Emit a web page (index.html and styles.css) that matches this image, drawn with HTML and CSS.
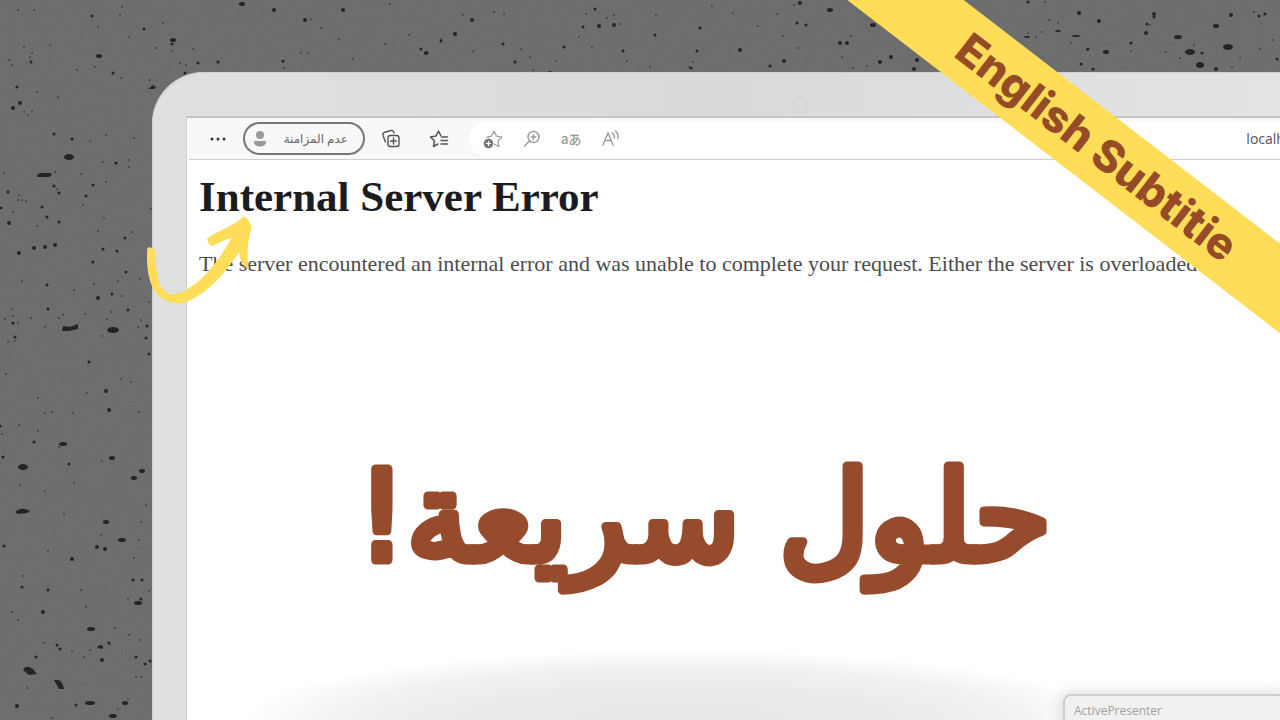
FILE: index.html
```html
<!DOCTYPE html>
<html lang="en">
<head>
<meta charset="utf-8">
<title>Internal Server Error</title>
<link rel="stylesheet" href="styles.css">
</head>
<body>
<div class="scene">
  <svg class="wall" viewBox="0 0 1280 720" preserveAspectRatio="xMinYMin slice" aria-hidden="true">
    <defs>
      <filter id="grain" x="0" y="0" width="100%" height="100%">
        <feTurbulence type="fractalNoise" baseFrequency="0.55" numOctaves="3" seed="4"/>
        <feColorMatrix values="0 0 0 0 0.2  0 0 0 0 0.2  0 0 0 0 0.2  0.9 0 0 0 -0.38"/>
      </filter>
    </defs>
    <rect width="1280" height="720" fill="#6c6c6c"/>
    <rect width="1280" height="720" filter="url(#grain)"/>
    <g class="pits">
      <path class="pit-s" d="M18 10h0M34 10h0M122 7h0M98 27h0M120 15h0M163 23h0M24 47h0M32 53h0M9 60h0M12 65h0M30 57h0M50 45h0M129 37h0M156 48h0M172 51h0M193 49h0M180 63h0M186 65h0M77 70h0M95 67h0M121 78h0M37 92h0M58 97h0M32 111h0M28 115h0M24 112h0M150 80h0M90 141h0M106 135h0M134 138h0M103 162h0M129 160h0M129 167h0M4 173h0M55 172h0M81 174h0M106 182h0M57 189h0M19 195h0M22 200h0M26 201h0M18 200h0M13 212h0M83 205h0M37 226h0M98 231h0M104 218h0M132 232h0M151 209h0M22 281h0M74 290h0M94 284h0M118 281h0M140 279h0M12 309h0M13 316h0M5 319h0M18 323h0M31 318h0M45 327h0M59 318h0M63 315h0M85 314h0M107 319h0M111 312h0M122 296h0M141 320h0M138 327h0M15 341h0M8 342h0M102 336h0M149 302h0M6 374h0M121 379h0M131 382h0M87 393h0M38 398h0M52 412h0M45 413h0M73 413h0M19 425h0M38 431h0M2 434h0M102 461h0M59 447h0M139 412h0M20 485h0M45 491h0M74 483h0M64 514h0M101 535h0M141 522h0M139 540h0M134 558h0M48 551h0M23 576h0M12 612h0M18 620h0M115 628h0M129 635h0M44 643h0M90 650h0M72 651h0M84 657h0M140 640h0M136 677h0M141 677h0M27 688h0M118 709h0M128 699h0M52 718h0M128 599h0M149 591h0M86 607h0M81 590h0M146 505h0M311 19h0M321 28h0M339 39h0M301 53h0M308 53h0M353 59h0M284 68h0M390 4h0M385 44h0M409 35h0M463 15h0M473 51h0M441 39h0M504 14h0M494 12h0M521 49h0M515 61h0M533 70h0M556 61h0M530 57h0M579 37h0M586 14h0M607 18h0M614 15h0M620 24h0M592 47h0M627 61h0M656 15h0M689 67h0M693 62h0M650 67h0M712 6h0M733 13h0M758 26h0M777 14h0M794 5h0M783 36h0M798 48h0M745 78h0M719 80h0M851 36h0M853 68h0M842 57h0M867 66h0M1028 33h0M1042 32h0M1049 20h0M1058 23h0M1036 37h0M1087 50h0M1131 51h0M1150 25h0M1194 45h0M1254 12h0M1273 40h0M1260 49h0M1240 58h0M1232 67h0M1166 52h0M1180 58h0M1071 43h0M1045 2h0"/>
      <path class="pit-m" d="M92 16h0M144 29h0M31 62h0M113 73h0M17 87h0M54 134h0M72 139h0M116 163h0M54 186h0M93 185h0M86 196h0M59 193h0M8 192h0M42 207h0M47 217h0M59 222h0M1 208h0M125 238h0M172 44h0M198 63h0M218 62h0M185 73h0M103 249h0M117 251h0M93 262h0M126 272h0M47 285h0M112 294h0M128 310h0M48 309h0M147 326h0M146 338h0M149 354h0M13 323h0M15 337h0M89 362h0M34 442h0M0 426h0M3 457h0M69 464h0M4 546h0M22 587h0M48 590h0M142 580h0M133 580h0M36 657h0M57 645h0M60 649h0M76 705h0M109 643h0M136 657h0M145 664h0M150 661h0M141 599h0M283 61h0M427 53h0M441 41h0M421 49h0M503 44h0M515 62h0M564 47h0M611 79h0M583 27h0M595 9h0M623 51h0M655 35h0M697 51h0M691 68h0M700 28h0M770 66h0M797 23h0M806 25h0M1028 2h0M1147 24h0M1154 17h0M1259 16h0M1265 14h0M1131 43h0M1088 49h0M1093 69h0M1081 64h0M1277 59h0M1202 53h0"/>
      <path class="pit-l" d="M20 103h0M13 108h0M55 245h0M19 253h0M34 248h0M45 247h0M9 223h0M98 298h0M106 391h0M109 410h0M97 547h0M105 549h0M43 612h0M102 660h0M72 559h0M274 10h0M305 20h0M343 10h0M455 34h0M472 20h0M426 53h0M550 73h0M599 26h0M614 25h0M740 50h0M784 61h0M800 3h0M840 43h0M847 43h0M880 62h0M891 57h0M917 60h0M914 69h0M1079 13h0M1099 21h0M1154 14h0M1146 33h0M1216 69h0M17 706h0"/>
      <ellipse cx="69" cy="157" rx="5" ry="3"/>
      <path d="M37 175l3-2h11l1 2-3 2H37zM148 89l5-4 3 2-2 2zM62 331l1-5 7 1 8-3v5l-9 2z"/>
      <ellipse cx="113" cy="330" rx="6" ry="3"/>
      <path d="M15 512q6-6 15-1l-3 2-9 1zM97 648q2-5 6-2v3zM23 670q3-6 10-1l4 5-8 1zM54 680q8-2 10 9h-5z"/>
      <ellipse cx="106" cy="522" rx="3" ry="2"/>
      <ellipse cx="122" cy="540" rx="4" ry="2"/>
      <ellipse cx="138" cy="603" rx="4" ry="2"/>
      <ellipse cx="91" cy="629" rx="4" ry="2"/>
      <ellipse cx="90" cy="703" rx="5" ry="2"/>
      <ellipse cx="113" cy="716" rx="4" ry="2"/>
      <ellipse cx="125" cy="703" rx="3" ry="2"/>
      <ellipse cx="23" cy="467" rx="5" ry="3"/>
      <ellipse cx="63" cy="444" rx="4" ry="2"/>
      <ellipse cx="112" cy="458" rx="3" ry="2"/>
      <ellipse cx="134" cy="478" rx="3" ry="2"/>
      <ellipse cx="142" cy="471" rx="3" ry="2"/>
      <ellipse cx="242" cy="4" rx="3" ry="2"/>
      <ellipse cx="173" cy="40" rx="3" ry="2"/>
      <ellipse cx="99" cy="56" rx="3" ry="2"/>
      <ellipse cx="830" cy="10" rx="3" ry="2"/>
      <ellipse cx="873" cy="25" rx="3" ry="2"/>
      <ellipse cx="1027" cy="37" rx="3" ry="1"/>
      <ellipse cx="1058" cy="31" rx="3" ry="1"/>
      <ellipse cx="1076" cy="36" rx="4" ry="1"/>
      <ellipse cx="1106" cy="52" rx="3" ry="2"/>
      <ellipse cx="1178" cy="37" rx="4" ry="2"/>
      <ellipse cx="1190" cy="52" rx="5" ry="3"/>
      <ellipse cx="1200" cy="65" rx="4" ry="3"/>
      <ellipse cx="1228" cy="47" rx="5" ry="3"/>
      <ellipse cx="1216" cy="26" rx="3" ry="2"/>
      <ellipse cx="1231" cy="15" rx="2" ry="2"/>
    </g>
  </svg>

  <div class="device">
    <div class="camera"></div>
    <div class="screen">
      <div class="toolbar">
        <button class="tool menu" aria-label="Menu"><svg width="18" height="18" viewBox="0 0 18 18"><g fill="#333"><circle cx="3" cy="9" r="1.5"/><circle cx="9" cy="9" r="1.5"/><circle cx="15" cy="9" r="1.5"/></g></svg></button>
        <button class="profile" dir="rtl" lang="ar"><span>عدم المزامنة</span><svg width="14" height="18" viewBox="0 0 14 18" fill="#999"><circle cx="7" cy="5" r="4"/><path d="M1 11h12v1c0 6-12 6-12 0z"/></svg></button>
        <button class="tool" aria-label="Collections"><svg width="20" height="20" viewBox="0 0 20 20" fill="none" stroke="#555" stroke-width="1.4" stroke-linecap="round"><rect x="7" y="6.500" width="11" height="11" rx="2.500"/><path d="M12.500 9v6M9.500 12h6M4.500 13 2 6.500Q1.300 4 3.800 3.200L10 1.500q2-.5 2.600 1.500l.4 1"/></svg></button>
        <button class="tool fav" aria-label="Favorites"><svg width="20" height="20" viewBox="0 0 20 20" fill="none" stroke="#555" stroke-width="1.500" stroke-linejoin="round" stroke-linecap="round"><path d="M12 7 9.500 2 7 7 1.500 8l4 4-1 5.500L9 15M13 8h5.500M12 11.500h6.500M12 15h6.500"/></svg></button>
        <div class="address">
          <button class="tool" aria-label="Add to favorites"><svg width="20" height="20" viewBox="0 0 20 20" fill="none" stroke="#999" stroke-width="1.200" stroke-linejoin="round"><path d="m11 2 2.500 5.200 5.500.8-4 4 1 5.500-5-2.500M6 9 4 8l4.500-.8L11 2"/><circle cx="5.500" cy="14.500" r="4.800" fill="#777" stroke="none"/><path d="M5.500 12v5M3 14.500h5" stroke="#fff"/></svg></button>
          <button class="tool" aria-label="Zoom"><svg width="20" height="20" viewBox="0 0 20 20" fill="none" stroke="#999" stroke-width="1.400" stroke-linecap="round"><circle cx="11.500" cy="8" r="5.500"/><path d="M7.500 12 2.500 17M11.500 5.500v5M9 8h5"/></svg></button>
          <button class="tool translate" aria-label="Translate">aあ</button>
          <button class="tool" aria-label="Read aloud"><svg width="20" height="20" viewBox="0 0 20 20" fill="none" stroke="#999" stroke-width="1.400" stroke-linecap="round"><path d="M3 16 8 4 13 16M5 11.500h6.500M12.500 4q2 2 2 5M15.500 2q3 3 2.500 7.500"/></svg></button>
          <span class="url">localhost</span>
        </div>
      </div>
      <main class="page">
        <h1>Internal Server Error</h1>
        <p>The server encountered an internal error and was unable to complete your request. Either the server is overloaded or</p>
      </main>
      <div class="glow"></div>
      <div class="presenter">ActivePresenter</div>
    </div>
  </div>

  <svg class="arrow" width="120" height="142" viewBox="0 0 360 426" aria-hidden="true"><path fill="#ffdd59" d="M22 250Q30 240 46 258C48 320 52 375 90 387C150 392 225 310 275 218C255 222 235 235 218 243C205 240 203 230 202 220C235 195 280 185 305 158Q312 150 320 160Q332 172 334 190C325 225 318 265 327 312C308 305 300 285 297 262C255 325 195 395 130 413C100 420 65 405 45 380C25 350 18 300 22 250z"/></svg>

  <svg class="headline" width="760" height="240" viewBox="0 0 760 240"><text x="380" y="144" text-anchor="middle" direction="rtl" lang="ar">حلول سريعة!</text></svg>
  <div class="ribbon">English Subtitie</div>
</div>
</body>
</html>
```

FILE: styles.css
```css
* { box-sizing: border-box; }
body { margin: 0; font-family: "Liberation Sans", Arial, sans-serif; }
button { border: 0; padding: 0; background: none; font: inherit; color: inherit; }
svg { display: block; }

.scene {
  position: relative;
  display: flex;
  min-height: 100vh;
  overflow: hidden;
  background: #6c6c6c;
}
.wall { position: absolute; inset: 0; width: 100%; height: 100%; }
.pits { fill: #242424; stroke: #242424; stroke-linecap: round; }
.pits ellipse, .pits path:not([class]) { stroke: none; }
.pit-s { stroke-width: 2; opacity: .6; }
.pit-m { stroke-width: 3; }
.pit-l { stroke-width: 4; }

.device {
  position: relative;
  flex: 1;
  display: flex;
  min-width: 0;
  margin: 72px 0 0 152px;
  padding: 44px 0 0 34px;
  border-radius: 52px 0 0 0;
  background: linear-gradient(90deg, #dfe1e0, #d9dada 50%, #e2e3e3);
  box-shadow: inset 1px 1px 0 #cfd0d0;
}
.camera {
  position: absolute;
  top: 25px;
  left: 640px;
  width: 16px;
  height: 16px;
  border: 1px solid #d3d4d4;
  border-radius: 50%;
}
.screen {
  position: relative;
  flex: 1;
  min-width: 0;
  overflow: hidden;
  background: #fff;
  border-top: 2px solid #c2c3c3;
  border-left: 1px solid #d0d1d1;
}
.toolbar {
  display: flex;
  align-items: center;
  height: 42px;
  margin-left: 2px;
  padding-left: 20px;
  background: #f8f8f8;
  border-bottom: 1px solid #cfcfcf;
}
.tool { flex: none; display: grid; place-items: center; width: 20px; height: 20px; }
.menu { width: 18px; }
.profile {
  flex: none;
  display: flex;
  align-items: center;
  justify-content: space-between;
  width: 122px;
  height: 33px;
  margin: 0 16px;
  padding: 0 15px 0 8px;
  border: 2px solid #777;
  border-radius: 17px;
  color: #666;
  font: 12px "Noto Sans", "DejaVu Sans", sans-serif;
}
.fav { margin: 0 20px 0 28px; }
.address {
  flex: 1;
  display: flex;
  align-items: center;
  gap: 19px;
  min-width: 0;
  height: 34px;
  padding-left: 14px;
  background: #fff;
  border-radius: 17px 0 0 17px;
}
.translate { color: #999; font: 500 13px/16px "Noto Sans CJK JP", sans-serif; white-space: nowrap; }
.url { margin-left: auto; margin-right: -25px; color: #555; font: 14px "Open Sans", sans-serif; }

.page { padding: 12px 0 0 12px; font-family: "Liberation Serif", "Times New Roman", serif; white-space: nowrap; }
h1 { margin: 0; color: #1c1c20; font-size: 43px; line-height: 50px; }
p { margin: 28px 0 0; color: #4c4c4c; font-size: 22px; line-height: 28px; }

.glow {
  position: absolute;
  left: 5%;
  right: 15%;
  bottom: -70px;
  height: 140px;
  background: radial-gradient(closest-side, #e8e8e8, #ebebeb 50%, #f1f1f1 75%, #ffffff);
}
.presenter {
  position: absolute;
  right: -8px;
  bottom: -8px;
  width: 225px;
  height: 34px;
  padding: 6px 9px;
  background: #f1f1f1;
  border: 2px solid #cecece;
  border-radius: 8px;
  box-shadow: 0 0 16px #d4d4d4;
  color: #a0a0a0;
  font: 12px/18px "Open Sans", sans-serif;
}
.arrow { position: absolute; left: 140px; top: 165px; }
.headline { position: absolute; left: 324px; top: 416px; overflow: visible; }
.headline text {
  fill: #954b2c;
  stroke: #954b2c;
  stroke-width: 9px;
  stroke-linejoin: round;
  font: 124px "DejaVu Sans", sans-serif;
}
.ribbon {
  position: absolute;
  top: 112px;
  right: -167px;
  width: 700px;
  height: 71px;
  background: #ffdd59;
  color: #954b26;
  font: 800 44px/71px Inter, "Liberation Sans", sans-serif;
  text-align: center;
  transform: rotate(37.6deg);
}
```
